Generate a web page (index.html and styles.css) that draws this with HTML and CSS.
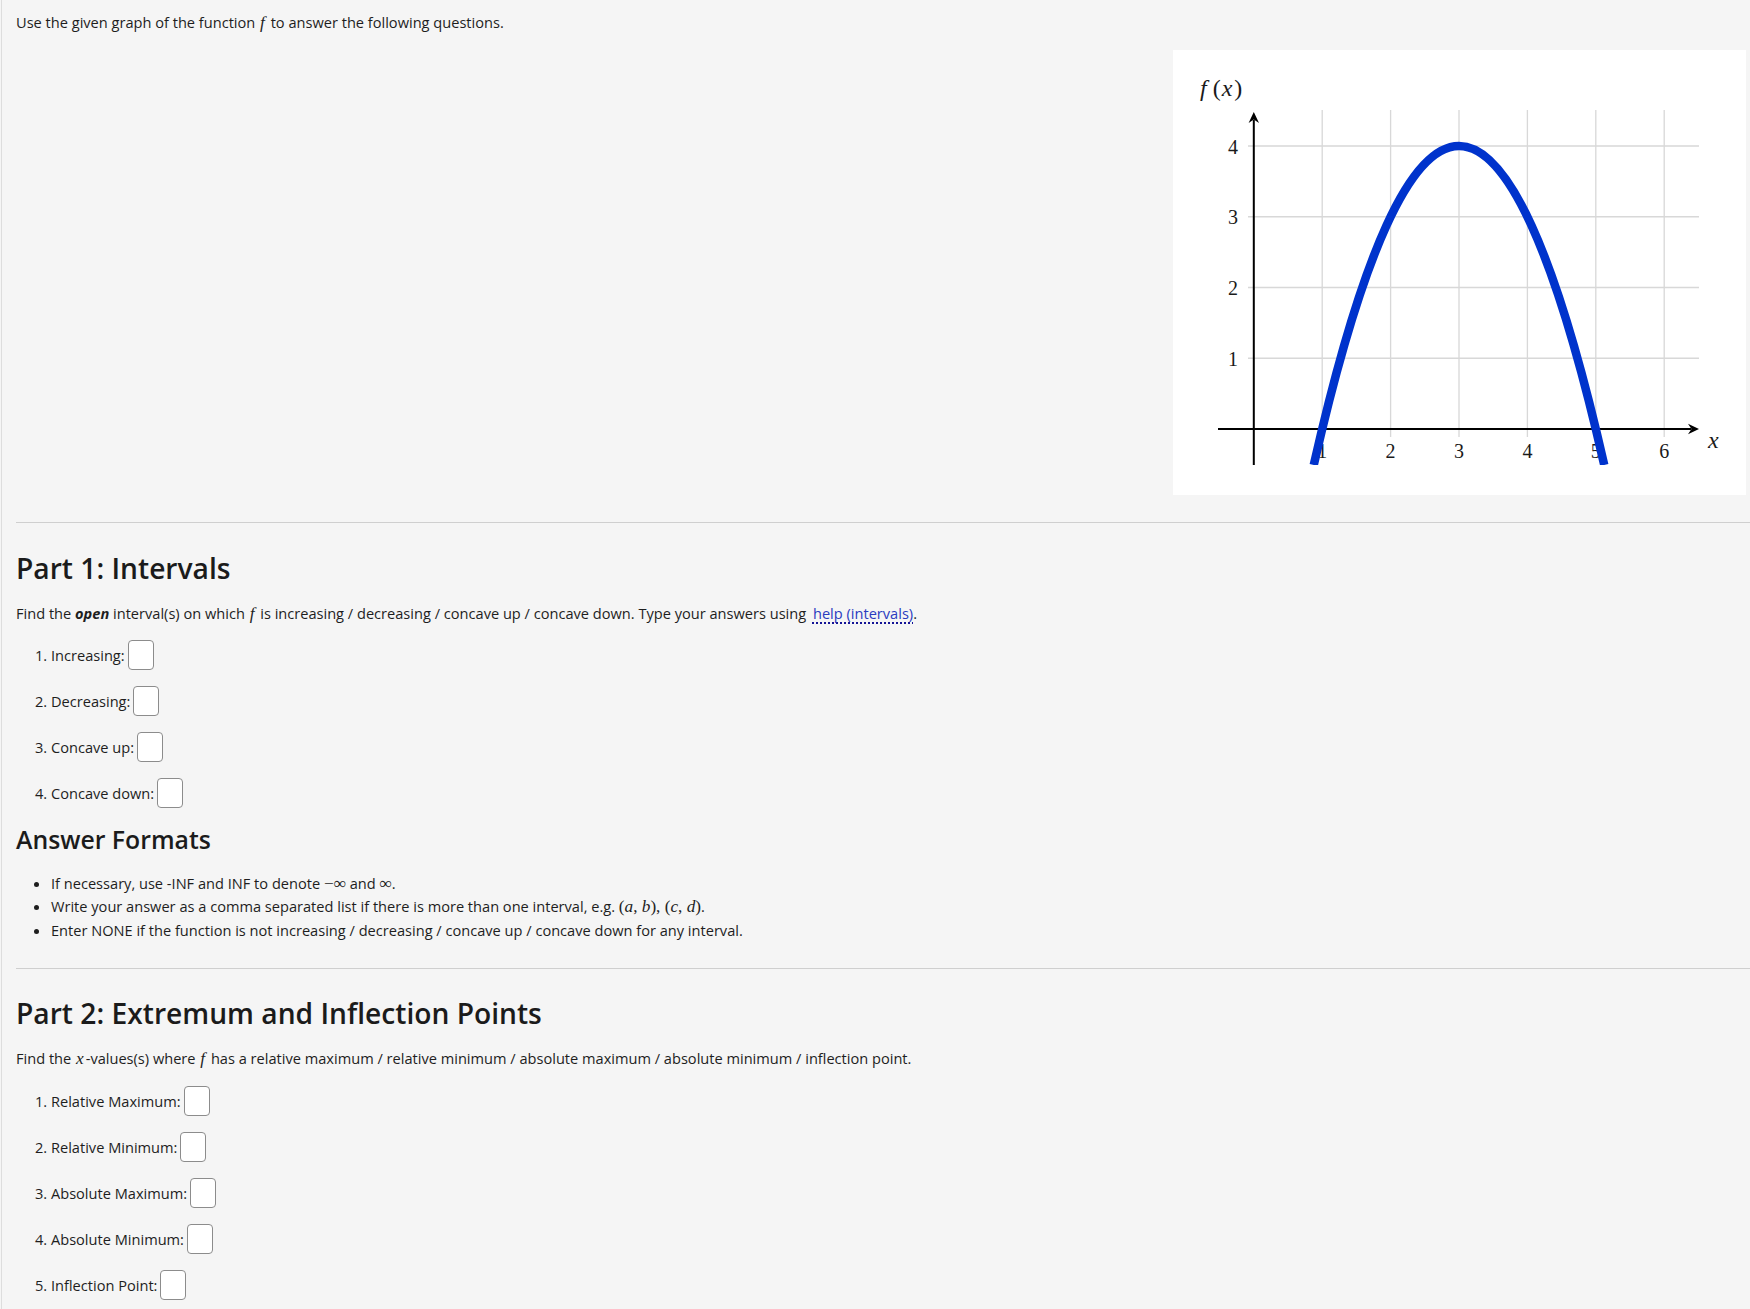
FILE: index.html
```html
<!DOCTYPE html>
<html lang="en">
<head>
    <meta charset="UTF-8">
    <meta name="viewport" content="width=device-width, initial-scale=1.0">
    <title>Graph of f - Intervals and Extrema</title>
    <link rel="stylesheet" href="styles.css">
</head>
<body>
    <div class="page">
        <p class="intro">Use the given graph of the function <span class="m">f</span> to answer the following questions.</p>

        <div class="graph-row">
            <svg class="graph" width="573" height="445" viewBox="0 0 573 445">
                <defs>
                    <clipPath id="plot-clip"><rect x="0" y="0" width="573" height="415"/></clipPath>
                </defs>
                <!-- grid -->
                <g class="grid">
                    <path d="M149.2 60V387 M217.6 60V387 M286 60V387 M354.4 60V387 M422.8 60V387 M491.2 60V387"/>
                    <path d="M75 96H526 M75 166.75H526 M75 237.5H526 M75 308.25H526"/>
                </g>
                <!-- tick labels -->
                <g class="ticks">
                    <text x="60" y="103.5">4</text>
                    <text x="60" y="174.2">3</text>
                    <text x="60" y="245">2</text>
                    <text x="60" y="315.7">1</text>
                    <text x="149.2" y="408">1</text>
                    <text x="217.6" y="408">2</text>
                    <text x="286" y="408">3</text>
                    <text x="354.4" y="408">4</text>
                    <text x="422.8" y="408">5</text>
                    <text x="491.2" y="408">6</text>
                </g>
                <text class="axis-label" x="27" y="46"><tspan class="it">f</tspan><tspan dx="6">(</tspan><tspan class="it" dx="1">x</tspan><tspan dx="2">)</tspan></text>
                <text class="axis-label it" x="535" y="398">x</text>
                <!-- axes -->
                <path class="axis" d="M80.8 415V70 M45 379H518"/>
                <path class="arrow" d="M80.8 62 L86 73 L80.8 69.5 L75.6 73 Z"/>
                <path class="arrow" d="M526 379 L515 373.8 L518.5 379 L515 384.2 Z"/>
                <!-- f(x) = -(x-1)(x-5) -->
                <path class="curve" clip-path="url(#plot-clip)" d="M140.76 415 Q286 -223 431.24 415"/>
            </svg>
        </div>

        <hr>

        <h2>Part 1: Intervals</h2>
        <p>Find the <b><i>open</i></b> interval(s) on which <span class="m">f</span> is increasing / decreasing / concave up / concave down. Type your answers using <a class="help" href="#">help (intervals)</a>.</p>
        <ol class="answers">
            <li>Increasing:<input class="box" type="text"></li>
            <li>Decreasing:<input class="box" type="text"></li>
            <li>Concave up:<input class="box" type="text"></li>
            <li>Concave down:<input class="box" type="text"></li>
        </ol>

        <h3>Answer Formats</h3>
        <ul class="formats">
            <li>If necessary, use -INF and INF to denote <span class="mu">&minus;&infin;</span> and <span class="mu">&infin;</span>.</li>
            <li>Write your answer as a comma separated list if there is more than one interval, e.g. <span class="mu">(<i>a</i>, <i>b</i>), (<i>c</i>, <i>d</i>)</span>.</li>
            <li>Enter NONE if the function is not increasing / decreasing / concave up / concave down for any interval.</li>
        </ul>

        <hr>

        <h2>Part 2: Extremum and Inflection Points</h2>
        <p>Find the <span class="m">x</span>-values(s) where <span class="m">f</span> has a relative maximum / relative minimum / absolute maximum / absolute minimum / inflection point.</p>
        <ol class="answers">
            <li>Relative Maximum:<input class="box" type="text"></li>
            <li>Relative Minimum:<input class="box" type="text"></li>
            <li>Absolute Maximum:<input class="box" type="text"></li>
            <li>Absolute Minimum:<input class="box" type="text"></li>
            <li>Inflection Point:<input class="box" type="text"></li>
        </ol>
    </div>
</body>
</html>
```

FILE: styles.css
```css
html,
body {
    margin: 0;
    padding: 0;
    background: #f5f5f5;
}

body {
    font-family: 'Open Sans', 'Noto Sans', sans-serif;
    font-size: 14.6px;
    line-height: 23.4px;
    color: #1e1e1e;
}

.page {
    margin-left: 1px;
    border-left: 1px solid #dddddd;
    padding: 11px 0 0 14px;
    min-height: 1298px;
}

p {
    margin: 0;
}

/* math bits */
.m {
    font-family: 'Liberation Serif', serif;
    font-style: italic;
    font-size: 1.18em;
    line-height: 0;
    margin: 0 2px 0 1px;
}

.mu {
    font-family: 'Liberation Serif', serif;
    font-size: 1.18em;
    line-height: 0;
}

.mu i {
    font-style: italic;
}

/* graph */
.graph-row {
    display: flex;
    justify-content: flex-end;
    margin: 15.6px 4px 27px 0;
}

.graph {
    display: block;
    background: #ffffff;
}

.grid path {
    stroke: #d8d8d8;
    stroke-width: 1.3;
    fill: none;
}

.ticks text {
    font-family: 'Liberation Serif', serif;
    font-size: 20px;
    fill: #1a1a1a;
    text-anchor: middle;
}

.axis-label {
    font-family: 'Liberation Serif', serif;
    font-size: 24px;
    fill: #1a1a1a;
}

.it {
    font-style: italic;
}

.axis {
    stroke: #000000;
    stroke-width: 2;
    fill: none;
}

.arrow {
    fill: #000000;
}

.curve {
    stroke: #0033cc;
    stroke-width: 8.5;
    fill: none;
}

/* graph-row bottom margin collapses into this one */
hr {
    border: 0;
    border-top: 1px solid #cfcfcf;
    height: 0;
    margin: 25.5px 0 0;
}

h2 {
    font-size: 28.2px;
    line-height: 37px;
    font-weight: 600;
    color: #1b1b1b;
    margin: 26.5px 0 15px;
}

h3 {
    font-size: 24.8px;
    line-height: 31px;
    font-weight: 600;
    color: #1b1b1b;
    margin: 0;
}

.help {
    color: #2a3cc0;
    text-decoration: underline dotted #141496;
    text-decoration-thickness: 2px;
    text-underline-offset: 4px;
    padding-left: 3px;
}

/* answer rows */
.answers {
    list-style: decimal inside;
    margin: 15px 0 0;
    padding-left: 19px;
}

.answers li {
    height: 30px;
    line-height: 30px;
    margin-bottom: 16px;
}

.box {
    box-sizing: border-box;
    width: 26px;
    height: 30px;
    margin: 0 0 0 3px;
    padding: 0;
    border: 1px solid #8c8c8c;
    border-radius: 4px;
    background: #ffffff;
    vertical-align: top;
}

.formats {
    margin: 17px 0 0;
    padding-left: 35px;
}
```
